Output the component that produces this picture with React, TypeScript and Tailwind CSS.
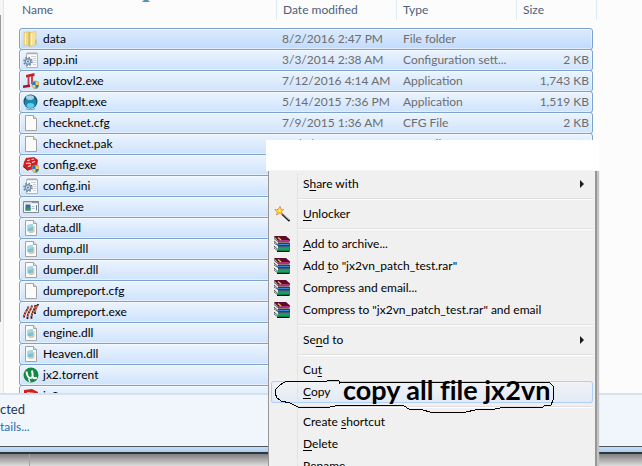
import React from 'react';

type IconKind =
  | 'folder'
  | 'ini'
  | 'auto'
  | 'orb'
  | 'blank'
  | 'config'
  | 'console'
  | 'dll'
  | 'claw'
  | 'torrent'
  | 'red';

interface FileRow {
  name: string;
  icon: IconKind;
  date?: string;
  type?: string;
  size?: string;
}

const FILES: FileRow[] = [
  { name: 'data', icon: 'folder', date: '8/2/2016 2:47 PM', type: 'File folder' },
  { name: 'app.ini', icon: 'ini', date: '3/3/2014 2:38 AM', type: 'Configuration sett...', size: '2 KB' },
  { name: 'autovl2.exe', icon: 'auto', date: '7/12/2016 4:14 AM', type: 'Application', size: '1,743 KB' },
  { name: 'cfeapplt.exe', icon: 'orb', date: '5/14/2015 7:36 PM', type: 'Application', size: '1,519 KB' },
  { name: 'checknet.cfg', icon: 'blank', date: '7/9/2015 1:36 AM', type: 'CFG File', size: '2 KB' },
  { name: 'checknet.pak', icon: 'blank', date: '12/1/2014 11:13 PM', type: 'PAK File', size: '1 KB' },
  { name: 'config.exe', icon: 'config' },
  { name: 'config.ini', icon: 'ini' },
  { name: 'curl.exe', icon: 'console' },
  { name: 'data.dll', icon: 'dll' },
  { name: 'dump.dll', icon: 'dll' },
  { name: 'dumper.dll', icon: 'dll' },
  { name: 'dumpreport.cfg', icon: 'blank' },
  { name: 'dumpreport.exe', icon: 'claw' },
  { name: 'engine.dll', icon: 'dll' },
  { name: 'Heaven.dll', icon: 'dll' },
  { name: 'jx2.torrent', icon: 'torrent' },
  { name: 'jx2.exe', icon: 'red' },
];

type MenuEntry =
  | { kind: 'sep' }
  | { kind: 'item'; label: string; key?: number; icon?: 'wand' | 'books'; sub?: boolean; hot?: boolean };

const SEP: MenuEntry = { kind: 'sep' };

// key is the index of the underlined letter
const MENU: MenuEntry[] = [
  { kind: 'item', label: 'Share with', key: 1, sub: true },
  SEP,
  { kind: 'item', label: 'Unlocker', key: 0, icon: 'wand' },
  SEP,
  { kind: 'item', label: 'Add to archive...', key: 0, icon: 'books' },
  { kind: 'item', label: 'Add to "jx2vn_patch_test.rar"', key: 4, icon: 'books' },
  { kind: 'item', label: 'Compress and email...', icon: 'books' },
  { kind: 'item', label: 'Compress to "jx2vn_patch_test.rar" and email', icon: 'books' },
  SEP,
  { kind: 'item', label: 'Send to', key: 2, sub: true },
  SEP,
  { kind: 'item', label: 'Cut', key: 2 },
  { kind: 'item', label: 'Copy', key: 0, hot: true },
  SEP,
  { kind: 'item', label: 'Create shortcut', key: 7 },
  { kind: 'item', label: 'Delete', key: 0 },
  { kind: 'item', label: 'Rename', key: 4 },
];

function Page() {
  return (
    <>
      <path d="M2.5 .5h8l3 3v12h-11z" fill="#fbfbfa" stroke="#a3a3a3" />
      <path d="M10.5 .5v3h3" fill="#e6e6e6" stroke="#a3a3a3" />
    </>
  );
}

function Shield() {
  return (
    <g>
      <path d="M12.5 8l3.500 1.200v2.800c0 2-1.500 3.200-3.500 4c-2-.8-3.500-2-3.500-4V9.200z" fill="#f3d24a" stroke="#6d7f96" strokeWidth=".5" />
      <path d="M9.200 9.400l3.300-1.200V12H9.200z" fill="#2f6fc4" />
      <path d="M12.500 12h3.300c-.2 1.800-1.500 2.900-3.300 3.700z" fill="#2f6fc4" />
    </g>
  );
}

function FileIcon({ kind }: { kind: IconKind }) {
  return (
    <svg viewBox="0 0 16 16" className="size-4 shrink-0" aria-hidden="true">
      {kind === 'folder' && (
        <>
          <path d="M1 1.500l4.500-1v14.500L1 14z" fill="#f2da83" stroke="#d9ba5c" strokeWidth=".5" />
          <path d="M5.500 1h3v14.500l-3-.5z" fill="#d9b954" />
          <path d="M7 1.500l6-1v13.500l-6 1.500z" fill="#f5e29a" stroke="#d8b95c" strokeWidth=".5" />
          <path d="M2.500 2.500v11M8.500 2.500v11.500" stroke="#fff6cc" />
          <path d="M12 8.500h1.500v5h-1.500z" fill="#b5c58c" />
        </>
      )}
      {kind === 'ini' && (
        <>
          <path d="M3.500 1.500h11v14h-11z" fill="#fcfcfc" stroke="#b4b4b4" />
          <path d="M5 0v2.500M7 0v2.500M9 0v2.500M11 0v2.500M13 0v2.500" stroke="#9a9a9a" strokeWidth=".7" />
          <path d="M8 4.500h5M10 6.500h3M10.500 8.500h3M10.500 10.500h3M10 12.500h3" stroke="#bcc2c9" strokeWidth=".8" />
          <circle cx="5" cy="9.500" r="4" fill="none" stroke="#6785a3" strokeWidth="1.600" strokeDasharray="1.570 1.570" />
          <circle cx="5" cy="9.500" r="2.700" fill="#dbe8f4" stroke="#7391af" strokeWidth="1.400" />
          <circle cx="5" cy="9.500" r=".9" fill="#47688c" />
        </>
      )}
      {kind === 'auto' && (
        <>
          <path d="M3 2l8.500-2v3L3 4.500z" fill="#c81e28" />
          <path d="M5.500 3.500v8.500M9 3v8" fill="none" stroke="#d0323a" strokeWidth="1.800" />
          <path d="M0 13.800l7-1" stroke="#a8141e" strokeWidth="2.600" />
          <Shield />
        </>
      )}
      {kind === 'orb' && (
        <>
          <circle cx="7.500" cy="7.500" r="7" fill="#17587c" />
          <circle cx="7.500" cy="8.500" r="5.700" fill="#1f86ad" />
          <ellipse cx="7.500" cy="11.500" rx="3.800" ry="2.500" fill="#58d3e6" />
          <ellipse cx="7" cy="3.600" rx="4" ry="2.300" fill="#a9d3e6" />
          <path d="M3 14.800q4.500 1.800 9 0" fill="none" stroke="#7f99a6" />
        </>
      )}
      {kind === 'blank' && <Page />}
      {kind === 'config' && (
        <>
          <path d="M3 1l8-1 4 3-1 8-9 2.500-5-3.500 1-5z" fill="#d3201f" />
          <path d="M4 3.500l3-.5M8.500 2.500l2.500-.5M3 6.500l3-.5 2 1M9 5.500l3-1M5 9.500l3-1" stroke="#fbe3dd" strokeWidth="1.100" />
          <path d="M.5 9.500l4.500 4" stroke="#7b1414" />
          <Shield />
        </>
      )}
      {kind === 'console' && (
        <>
          <path d="M.5 2.500h15v11H.5z" fill="#f8fafb" stroke="#848a90" />
          <path d="M1 3h14v1.500H1z" fill="#cdd5dd" />
          <path d="M9.500 3.500h1M11.500 3.500h1M13.500 3.500h1" stroke="#55606c" />
          <path d="M2.500 5.500h5v6h-5z" fill="#37688f" />
          <path d="M2.500 8.500h5v3h-5z" fill="#3a916d" />
          <path d="M8.500 7.500h3M8.500 9.500h3" stroke="#b3bbc3" />
          <path d="M13.500 6v5.500" stroke="#5b86b8" />
        </>
      )}
      {kind === 'dll' && (
        <>
          <Page />
          <path d="M6 6h5.500v5.500L10 13H6z" fill="#d2cdb2" />
          <path d="M4.500 5l5.500-1v6.500l-5.500 1z" fill="#7fbfd2" />
          <path d="M4.500 5l5.500-1v3L4.500 8.500z" fill="#a5d8e4" />
        </>
      )}
      {kind === 'claw' && (
        <>
          <path
            d="M5.500 2.500C4.500 6.500 1 8.500 1 14M9 1.500C8 6.500 4 9 4.500 15M12.500 1C11.500 6.500 8 9 8.500 15M15.500 0c-2.500 3-3.500 6-3.500 10"
            fill="none"
            stroke="#3d1713"
            strokeWidth="1.800"
            strokeDasharray="2.500 .5"
          />
          <path
            d="M5.500 3C4.500 6.500 1.500 9 1.300 12M9 2C8 6.500 4.800 9 4.800 13M12.500 2C11.500 6.500 8.500 9 8.800 12M14.500 1.500c-1.500 2.500-2 4-2.300 6.500"
            fill="none"
            stroke="#f0623a"
            strokeWidth="1.100"
            strokeDasharray="3 .8"
          />
        </>
      )}
      {kind === 'torrent' && (
        <>
          <circle cx="8" cy="8" r="7.500" fill="#128a41" />
          <path d="M3.500 4.500c.5 4.500 1.500 6.500 4 6.500s2.500-2.500 1.500-7.500M9.500 9c.5 2.500 2.500 3 4.500 1.500" fill="none" stroke="#fff" strokeWidth="2" />
          <path d="M5.500 11.500l1.500 3.500" stroke="#fff" strokeWidth="1.500" />
        </>
      )}
      {kind === 'red' && (
        <>
          <path d="M1 2l8-1 6 3v10H1z" fill="#d3201f" />
          <path d="M4 4.500l8 1" stroke="#f6c5bd" />
        </>
      )}
    </svg>
  );
}

function MenuIcon({ kind }: { kind: 'wand' | 'books' }) {
  if (kind === 'wand') {
    return (
      <svg viewBox="0 0 16 16" className="size-4" aria-hidden="true">
        <path d="M8 8l7.500 7" stroke="#1c1c1c" strokeWidth="1.800" />
        <path d="M8.500 7.800l6.500 6" stroke="#b8b8b8" strokeWidth=".8" />
        <path d="M6 .5l.8 2.500 2.700.5L7.500 5.500l.8 3-2.800-1.300L2.500 9l.8-3.200L.8 3.800 4 3.500z" fill="#ffd92e" stroke="#d65a1c" strokeWidth=".8" strokeDasharray="1.500 .7" />
        <path d="M4.500 4.500l1.500-1v2.500z" fill="#fff9c8" />
      </svg>
    );
  }
  return (
    <svg viewBox="0 0 16 16" className="size-4" aria-hidden="true">
      <path d="M0 0h12l4 3.500V5H4z" fill="#5e0a2c" />
      <path d="M4 4h11.500v1.500H4z" fill="#b8307c" />
      <path d="M0 .5l4 4v1l-4-3zM0 5l4 3.500v1L0 7zM0 10l4 3.500v1.500l-4-3z" fill="#fff" stroke="#222" strokeWidth=".7" />
      <path d="M4 5.500h11.500v1H4z" fill="#22060f" />
      <path d="M4 7h12v3.500H4z" fill="#123f8f" />
      <path d="M4 8h11.500v1H4z" fill="#3b8ad6" />
      <path d="M4 10.500h12v1H4z" fill="#0a1222" />
      <path d="M4 11.500h12v3.500H4z" fill="#0c7a4c" />
      <path d="M4 12.500h11.500v1H4z" fill="#2cc084" />
      <path d="M3 15.500h12.500" stroke="#111" />
      <path d="M4 1.500l3 2.500" stroke="#e9c53c" strokeWidth="1.500" />
    </svg>
  );
}

function MenuLabel({ label, at }: { label: string; at?: number }) {
  if (at === undefined) return <span>{label}</span>;
  return (
    <span>
      {label.slice(0, at)}
      <u className="underline-offset-2">{label[at]}</u>
      {label.slice(at + 1)}
    </span>
  );
}

const COLUMNS = 'grid grid-cols-[258px_120px_120px_80px]';

function FileList() {
  return (
    <table className="block w-[578px] text-xs">
      <thead className="block">
        <tr className={`${COLUMNS} h-[18px]`}>
          {['Name', 'Date modified', 'Type', 'Size'].map((title, i) => (
            <th key={title} className="h-full border-r border-[#dfeaf7] text-left font-normal text-[#4c607a]">
              <button className={`block h-full leading-5 ${i === 0 ? 'pl-[3px]' : 'pl-[6px]'}`}>{title}</button>
            </th>
          ))}
        </tr>
      </thead>
      <tbody className="block pt-[10px]">
        {FILES.map((file, i) => (
          <tr
            key={file.name}
            className={`-mb-px h-[22px] w-[574px] items-center rounded-[3px] border border-[#7da2ce] leading-5 text-[#6d6d6d] shadow-[inset_0_0_0_1px_rgba(255,255,255,0.45)] bg-linear-to-b ${COLUMNS} ${
              i === 0 ? 'from-[#dcebfc] to-[#c1dbfc]' : 'from-[#ebf4fd] to-[#cfe3fd]'
            }`}
          >
            <td className="flex items-center gap-1 pl-[3px] text-black">
              <FileIcon kind={file.icon} />
              {file.name}
            </td>
            <td className="pl-1 whitespace-nowrap">{file.date}</td>
            <td className="pl-[5px] whitespace-nowrap">{file.type}</td>
            <td className="pr-[9px] text-right whitespace-nowrap">{file.size}</td>
          </tr>
        ))}
      </tbody>
    </table>
  );
}

function ContextMenu() {
  return (
    <div className="absolute top-[140px] left-[266px] w-[333px]">
      <div className="h-[31px] bg-white" />
      <div
        role="menu"
        className="mr-[2px] ml-[2px] border-r-2 border-l border-[#979797] bg-[#f0f0f0] px-[2px] pt-[2px] shadow-[2px_0_1px_#c4c4c4]"
      >
        {MENU.map((entry, i) =>
          entry.kind === 'sep' ? (
            <div key={i} className="flex h-2">
              <div className="w-[27px] border-r border-[#e2e3e3]" />
              <div className="mt-[3px] h-[2px] flex-1 border-t border-[#dfdfdf] bg-white" />
            </div>
          ) : (
            <button
              key={i}
              role="menuitem"
              className={`flex h-[22px] w-full items-center text-left text-xs whitespace-nowrap text-black ${
                entry.hot
                  ? 'rounded-[3px] bg-linear-to-b from-[#f0f3f6] to-[#e3eaf4] shadow-[inset_0_0_0_1px_#aecff7]'
                  : ''
              }`}
            >
              <span className="flex h-full w-[27px] shrink-0 items-center border-r border-[#e2e3e3] pl-[3px]">
                {entry.icon && <MenuIcon kind={entry.icon} />}
              </span>
              <span className="flex-1 pl-[5px]">
                <MenuLabel label={entry.label} at={entry.key} />
              </span>
              {entry.sub && (
                <svg viewBox="0 0 4 8" className="mr-[9px] h-2 w-1" aria-hidden="true">
                  <path d="M0 0l4 4-4 4z" fill="#1b1b1b" />
                </svg>
              )}
            </button>
          ),
        )}
      </div>
    </div>
  );
}

// freehand loop and note scribbled around the Copy entry
function Annotation() {
  return (
    <div className="pointer-events-none absolute top-[374px] left-[270px] h-10 w-[290px]">
      <svg viewBox="270 374 290 40" className="h-10 w-[290px]" shapeRendering="crispEdges" aria-hidden="true">
        <path
          d="M339 384v-3l-3-1-9 1h-33l-9 1-5 3-4 4-1 4 2 5 4 3 9 2 8 4h32l10-2h60l4 1 5 3 14 1 7 2h36l9-2 20-1 10-2h20M510 407h33l2-2h6l2-5v-14l-4-4H340"
          fill="none"
          stroke="#000"
        />
      </svg>
      <p className="absolute top-0 left-[73px] font-[Lato] text-[27px] leading-8 font-bold whitespace-nowrap text-black [font-variant-ligatures:none]">
        copy all file jx2vn
      </p>
    </div>
  );
}

export default function App() {
  return (
    <div className="relative flex h-screen flex-col overflow-hidden bg-[#fcfcfc] font-['Lato',sans-serif]">
      <div className="flex min-h-0 flex-1">
        <div className="w-[4px] shrink-0 border-r border-[#dbe7f5] bg-[#f7f4f4]">
          <div className="h-[15px]" />
          <div className="h-[307px] w-px bg-[#999]" />
        </div>
        <main className="min-w-0 flex-1 overflow-hidden pl-[15px]">
          <FileList />
        </main>
      </div>
      <svg viewBox="0 0 8 4" className="absolute top-[-2px] left-[142px] h-1 w-2" aria-hidden="true">
        <path d="M0 4l4-4 4 4z" fill="#5b93b8" />
      </svg>
      <footer className="h-[73px] shrink-0">
        <div className="h-[53px] border-t-2 border-[#d5e1ef] bg-[#f1f5fc] pt-1 text-xs">
          <p className="h-[18px] text-[13px] leading-5 text-[#1e395b]">cted</p>
          <a href="#details" className="block leading-5 text-[#1f6fb2]">
            tails...
          </a>
        </div>
        <div className="h-2 border-t border-b-2 border-t-[#50565f] border-b-[#30353c] bg-linear-to-b from-[#c5dcf2] to-[#a9cdf1]" />
        <div className="flex h-3 bg-linear-to-b from-[#808080] to-[#dedede]">
          <div className="w-[30px] border-r border-[#a5a5a5]" />
        </div>
      </footer>
      <ContextMenu />
      <Annotation />
    </div>
  );
}
